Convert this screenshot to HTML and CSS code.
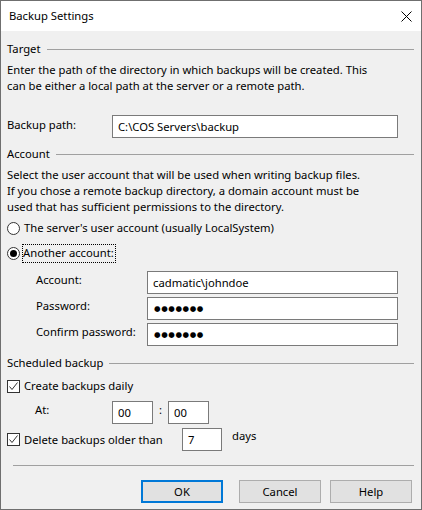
FILE: index.html
```html
<!DOCTYPE html>
<html lang="en">
<head>
  <meta charset="UTF-8" />
  <title>Backup Settings</title>
  <link rel="stylesheet" href="styles.css">
</head>
<body>
  <div class="window">
    <div class="titlebar">
      <span class="title">Backup Settings</span>
      <svg class="close" width="11" height="11" viewBox="0 0 11 11">
        <path d="M0.5 0.5L10.5 10.5M10.5 0.5L0.5 10.5" stroke="#000" stroke-width="1" fill="none"/>
      </svg>
    </div>

    <div class="content">
      <div class="group target-group"><span>Target</span></div>
      <p class="desc">Enter the path of the directory in which backups will be created. This<br>can be either a local path at the server or a remote path.</p>
      <div class="path-row">
        <span class="label">Backup path:</span>
        <div class="field path-field">C:\COS Servers\backup</div>
      </div>

      <div class="group account-group"><span>Account</span></div>
      <p class="desc">Select the user account that will be used when writing backup files.<br>If you chose a remote backup directory, a domain account must be<br>used that has sufficient permissions to the directory.</p>
      <div class="option first-option">
        <span class="radio"></span>
        <span>The server's user account (usually LocalSystem)</span>
      </div>
      <div class="option second-option">
        <span class="radio checked"></span>
        <span class="focus">Another account:</span>
      </div>
      <div class="account-grid">
        <span class="label">Account:</span>
        <div class="field">cadmatic\johndoe</div>
        <span class="label">Password:</span>
        <div class="field dots">●●●●●●●</div>
        <span class="label">Confirm password:</span>
        <div class="field dots">●●●●●●●</div>
      </div>

      <div class="group schedule-group"><span>Scheduled backup</span></div>
      <div class="option daily-option">
        <span class="check"><svg width="11" height="11" viewBox="0 0 11 11"><path d="M1.5 5.5L4 8.5L9.5 1.5" stroke="#333" stroke-width="1" fill="none"/></svg></span>
        <span>Create backups daily</span>
      </div>
      <div class="time-row">
        <span class="label at-label">At:</span>
        <div class="field small">00</div>
        <span class="colon">:</span>
        <div class="field small">00</div>
      </div>
      <div class="delete-row">
        <span class="check"><svg width="11" height="11" viewBox="0 0 11 11"><path d="M1.5 5.5L4 8.5L9.5 1.5" stroke="#333" stroke-width="1" fill="none"/></svg></span>
        <span class="delete-label">Delete backups older than</span>
        <div class="field small days-field">7</div>
        <span class="days">days</span>
      </div>

      <div class="separator"></div>
      <div class="buttons">
        <button class="ok">OK</button>
        <button class="cancel">Cancel</button>
        <button class="help">Help</button>
      </div>
    </div>
  </div>
</body>
</html>
```

FILE: styles.css
```css
:root {
  --face: #f0f0f0;
  --edge: #7a7a7a;
  --rule: #a0a0a0;
  --text: #000;
}

body {
  margin: 0;
  font-family: "Noto Sans", "Liberation Sans", sans-serif;
  font-size: 11.25px;
  color: var(--text);
}

.window {
  width: 420px;
  height: 508px;
  border: 1px solid #6f6f6f;
  background: var(--face);
  overflow: hidden;
}

.titlebar {
  height: 30px;
  background: white;
  display: flex;
  align-items: center;
  justify-content: space-between;
  padding: 0 9px 0 8px;
}

.title {
  line-height: 16px;
}

.content {
  padding: 0 7px 0 6px;
  line-height: 16px;
}

.group {
  display: flex;
  align-items: center;
  height: 16px;
  white-space: nowrap;
}

.group::after {
  content: "";
  flex: 1;
  height: 1px;
  background: var(--rule);
  margin-left: 6px;
}

.target-group { margin-top: 10px; }
.account-group { margin-top: 8px; }
.schedule-group { margin-top: 9px; }

.desc {
  margin: 5px 0 0;
  white-space: nowrap;
}

.label {
  white-space: nowrap;
}

.field {
  box-sizing: border-box;
  height: 23px;
  border: 1px solid var(--edge);
  background: white;
  padding: 0 5px;
  display: flex;
  align-items: center;
  white-space: nowrap;
}

.path-row {
  display: flex;
  align-items: flex-start;
  margin-top: 21px;
}

.path-row .label {
  width: 105px;
  padding-top: 2px;
}

.path-field {
  width: 286px;
}

.option {
  display: flex;
  align-items: center;
  height: 16px;
  white-space: nowrap;
}

.first-option { margin-top: 5px; }
.second-option { margin-top: 9px; }
.daily-option { margin-top: 7px; }

.radio {
  box-sizing: border-box;
  width: 13px;
  height: 13px;
  border: 1px solid #333;
  border-radius: 50%;
  background: white;
  margin-right: 4px;
  display: flex;
  align-items: center;
  justify-content: center;
}

.radio.checked::after {
  content: "";
  width: 7px;
  height: 7px;
  border-radius: 50%;
  background: #000;
}

.focus {
  outline: 1px dotted #000;
  outline-offset: 0;
  margin-left: -1px;
  padding: 0 1px 1px 0;
}

.check {
  box-sizing: border-box;
  width: 13px;
  height: 13px;
  border: 1px solid #333;
  background: white;
  margin-right: 4px;
  display: flex;
  align-items: center;
  justify-content: center;
  flex-shrink: 0;
}

.account-grid {
  display: grid;
  grid-template-columns: 111px 251px;
  row-gap: 3px;
  margin-top: 10px;
  padding-left: 29px;
}

.account-grid .label {
  padding-top: 1px;
}

.dots {
  font-family: "DejaVu Sans", sans-serif;
  font-size: 7.5px;
  letter-spacing: 0.6px;
  padding-left: 6px;
}

.time-row {
  display: flex;
  align-items: flex-start;
  margin-top: 7px;
}

.at-label {
  box-sizing: border-box;
  width: 105px;
  padding-left: 28px;
  padding-top: 1px;
}

.small {
  width: 41px;
}

.colon {
  width: 15px;
  text-align: center;
  padding-top: 1px;
}

.delete-row {
  display: flex;
  align-items: center;
  margin-top: 4px;
  height: 23px;
}

.delete-label {
  width: 158px;
  white-space: nowrap;
}

.days-field {
  width: 40px;
}

.days {
  align-self: flex-start;
  margin-left: 10px;
}

.separator {
  height: 1px;
  background: var(--rule);
  margin: 14px 0 0 6px;
}

.buttons {
  display: flex;
  margin-top: 14px;
  padding-left: 134px;
}

.buttons button {
  box-sizing: border-box;
  width: 82px;
  height: 23px;
  background: #e1e1e1;
  border: 1px solid #adadad;
  font-family: inherit;
  font-size: 11.25px;
  color: var(--text);
  padding: 0;
}

.buttons .ok {
  border: 2px solid #0078d7;
}

.buttons .cancel {
  margin-left: 16px;
}

.buttons .help {
  margin-left: 9px;
}
```
